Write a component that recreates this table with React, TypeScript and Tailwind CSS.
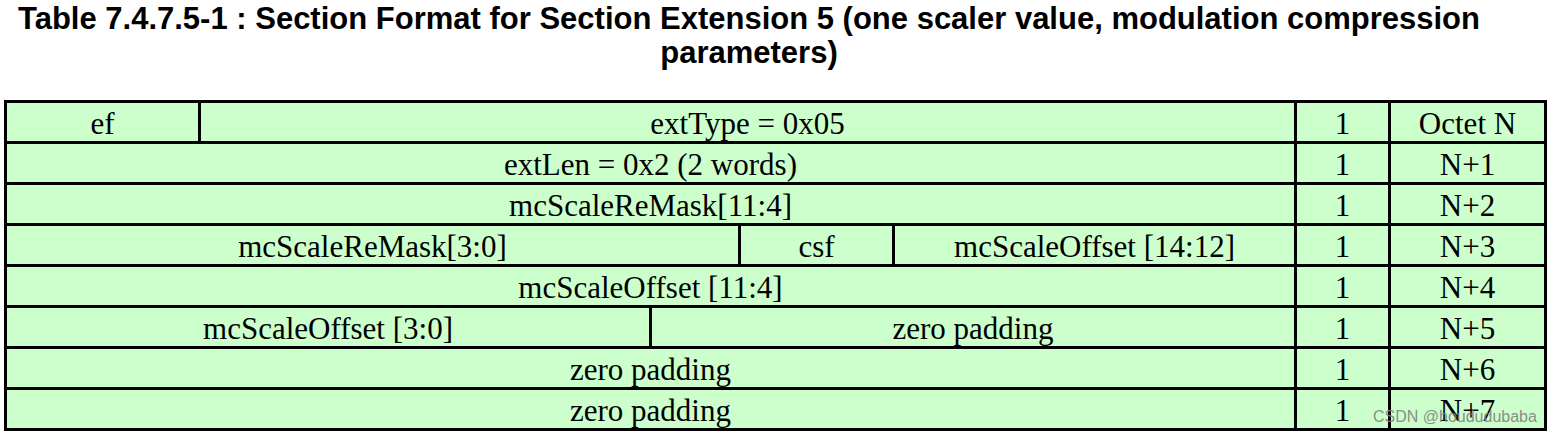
type Cell = { text: string; span: string };

const rows: Cell[][] = [
  [
    { text: 'ef', span: 'col-span-1' },
    { text: 'extType = 0x05', span: 'col-span-4' },
    { text: '1', span: 'col-span-1' },
    { text: 'Octet N', span: 'col-span-1' },
  ],
  [
    { text: 'extLen = 0x2 (2 words)', span: 'col-span-5' },
    { text: '1', span: 'col-span-1' },
    { text: 'N+1', span: 'col-span-1' },
  ],
  [
    { text: 'mcScaleReMask[11:4]', span: 'col-span-5' },
    { text: '1', span: 'col-span-1' },
    { text: 'N+2', span: 'col-span-1' },
  ],
  [
    { text: 'mcScaleReMask[3:0]', span: 'col-span-3' },
    { text: 'csf', span: 'col-span-1' },
    { text: 'mcScaleOffset [14:12]', span: 'col-span-1' },
    { text: '1', span: 'col-span-1' },
    { text: 'N+3', span: 'col-span-1' },
  ],
  [
    { text: 'mcScaleOffset [11:4]', span: 'col-span-5' },
    { text: '1', span: 'col-span-1' },
    { text: 'N+4', span: 'col-span-1' },
  ],
  [
    { text: 'mcScaleOffset [3:0]', span: 'col-span-2' },
    { text: 'zero padding', span: 'col-span-3' },
    { text: '1', span: 'col-span-1' },
    { text: 'N+5', span: 'col-span-1' },
  ],
  [
    { text: 'zero padding', span: 'col-span-5' },
    { text: '1', span: 'col-span-1' },
    { text: 'N+6', span: 'col-span-1' },
  ],
  [
    { text: 'zero padding', span: 'col-span-5' },
    { text: '1', span: 'col-span-1' },
    { text: 'N+7', span: 'col-span-1' },
  ],
];

export default function App() {
  return (
    <div className="relative w-[1551px] h-[436px] bg-white overflow-hidden">
      <div className="w-[1498px] pt-[2px] text-center font-bold text-[31px] leading-[34px] text-black font-['Liberation_Sans',Arial,sans-serif]">
        Table 7.4.7.5-1 : Section Format for Section Extension 5 (one scaler value, modulation compression
        <br />
        parameters)
      </div>

      <div className="mt-[30px] ml-[4px] w-[1543px] grid grid-cols-[191px_448px_86px_151px_399px_91px_153px] auto-rows-[38px] gap-[3px] p-[3px] bg-black text-black text-[31px] font-['Liberation_Serif','Times_New_Roman',serif]">
        {rows.map((row, i) =>
          row.map((cell, j) => (
            <div
              key={`${i}-${j}`}
              className={`${cell.span} bg-[#ccffcc] text-center leading-[36px] pt-[3px] whitespace-nowrap`}
            >
              {cell.text}
            </div>
          ))
        )}
      </div>

      <div className="absolute left-[1373px] top-[407px] text-[16px] leading-[20px] text-[#808080]/90 font-['Liberation_Sans',Arial,sans-serif]">
        CSDN @hoududubaba
      </div>
    </div>
  );
}
